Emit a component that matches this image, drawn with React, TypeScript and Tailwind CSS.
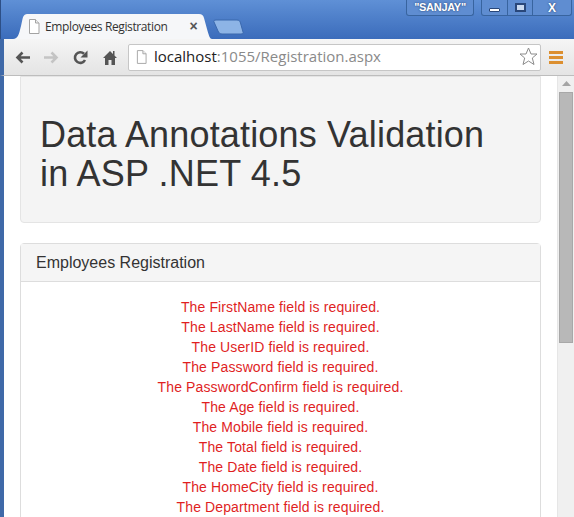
import React from "react";

const errors = ["FirstName", "LastName", "UserID", "Password", "PasswordConfirm", "Age", "Mobile", "Total", "Date", "HomeCity", "Department"];

function PageIcon({ className }: { className: string }) {
  return (
    <svg className={className} viewBox="0 0 12 15" fill="none">
      <path d="M1.5 .5H7.5L11 4V14.5H1.5Z" fill="#fff" stroke="#a3a3a3" />
      <path d="M7.5 .5V4H11" stroke="#a3a3a3" fill="#eee" />
    </svg>
  );
}

export default function App() {
  return (
    <div className="w-[574px] h-[517px] overflow-hidden flex flex-col bg-white font-['Liberation_Sans',Arial,sans-serif]">
      {/* title bar */}
      <div className="h-[39px] shrink-0 bg-gradient-to-b from-[#5f90d6] to-[#3b6cbb] flex border-l-[1px] border-[#2d4f86] relative">
        <div className="relative ml-[12px] mt-[14px] w-[199px] h-[25px]">
          <svg className="absolute inset-0" width="199" height="25" viewBox="0 0 199 25">
            <path d="M0 25C5 25 6 20 8 12L9.500 5C10.500 1 12 0 15 0H186C189 0 190 1 191 4L194 15C196 22 197 25 199 25Z" fill="#f6f7f9" />
          </svg>
          <div className="relative flex items-center h-full pl-[15px]">
            <PageIcon className="w-[12px] h-[15px]" />
            <span className="ml-[5px] text-[12px] text-[#333] font-['Open_Sans',sans-serif] tracking-[-0.38px]">Employees Registration</span>
            <span className="ml-[22px] text-[14px] font-bold text-[#555]">×</span>
          </div>
        </div>
        <svg className="mt-[19px] ml-[1px]" width="32" height="16" viewBox="0 0 32 16">
          <path d="M3 1H24C26 1 27 2 27.500 4L30 13C30.500 14 30 15 28 15H9C7 15 6 14 5 12L1 3C.5 2 1 1 3 1Z" fill="#8db4e6" stroke="#3a68ad" />
        </svg>
        <div className="absolute top-0 left-[405px] w-[68px] h-[16px] rounded-b-[3px] border border-t-0 border-[#38649f] bg-[#5f8dd1] flex items-center justify-center text-[11px] font-bold text-white [text-shadow:0_0_2px_#1d3763] tracking-[-0.3px]">
          "SANJAY"
        </div>
        <div className="absolute top-0 left-[480px] w-[91px] h-[16px] rounded-b-[3px] border border-t-0 border-[#38649f] bg-[#5f8dd1] flex">
          <div className="w-[26px] border-r border-[#38649f] flex items-end justify-center pb-[3px]">
            <div className="w-[11px] h-[4px] border border-[#29477a] bg-white rounded-[1px]" />
          </div>
          <div className="w-[25px] border-r border-[#38649f] flex items-center justify-center">
            <div className="w-[11px] h-[9px] border-2 border-[#29477a] bg-[#c9d9ef]" />
          </div>
          <div className="flex-1 flex items-center justify-center text-[12px] font-bold text-white [text-shadow:0_0_2px_#1d3763]">X</div>
        </div>
      </div>

      {/* toolbar */}
      <div className="h-[37px] shrink-0 bg-gradient-to-b from-[#f5f5f5] to-[#e4e4e4] border-l-[4px] border-b border-l-[#3f69a8] border-b-[#bdbdbd] flex items-center">
        <svg className="ml-[11px]" width="15" height="13" viewBox="0 0 15 13" fill="none" stroke="#555" strokeWidth="2.600">
          <path d="M15 6.500H3M7.500 1.500L2.500 6.500L7.500 11.500" />
        </svg>
        <svg className="ml-[14px]" width="15" height="13" viewBox="0 0 15 13" fill="none" stroke="#c4c4c4" strokeWidth="2.600">
          <path d="M0 6.500H12M7.500 1.500L12.500 6.500L7.500 11.500" />
        </svg>
        <svg className="ml-[14px]" width="15" height="15" viewBox="0 0 15 15" fill="none">
          <path d="M12 10A5.300 5.300 0 1 1 11 3.800" stroke="#555" strokeWidth="2.600" />
          <path d="M14.500 0.500V7.500H7.500Z" fill="#555" />
        </svg>
        <svg className="ml-[15px]" width="14" height="15" viewBox="0 0 14 15">
          <path d="M7 1L0 8H2V15H5.500V10H8.500V15H12V8H14L11.500 5.500V1H10V4Z" fill="#555" />
        </svg>
        <div className="ml-[11px] w-[413px] h-[27px] bg-white border border-[#c6c6c6] rounded-[2px] flex items-center pl-[7px] pb-[1px]">
          <PageIcon className="w-[11px] h-[14px]" />
          <span className="ml-[7px] text-[15px] font-['Open_Sans',sans-serif] text-[#8a8a8a] whitespace-nowrap"><span className="text-[#222]">localhost</span>:1055/Registration.aspx</span>
          <svg className="ml-auto mr-[2px]" width="19" height="19" viewBox="0 0 19 19">
            <path d="M9.500 1L12 7H18L13.300 11L15 17.500L9.500 14L4 17.500L5.700 11L1 7H7Z" fill="#fff" stroke="#8b8b8b" />
          </svg>
        </div>
        <div className="ml-[8px] w-[14px] flex flex-col gap-[2px]">
          <div className="h-[3px] bg-[#dc8f2f]" />
          <div className="h-[3px] bg-[#dc8f2f]" />
          <div className="h-[3px] bg-[#dc8f2f]" />
        </div>
      </div>

      {/* viewport */}
      <div className="flex-1 flex min-h-0 border-l-[4px] border-[#3f69a8]">
        <div className="flex-1 min-w-0 pl-[16px] pr-[16px] overflow-hidden">
          <div className="h-[147px] bg-[#f4f4f4] border border-[#e4e4e4] rounded-b-[4px] pl-[19px] pt-[38px] text-[36px] leading-[39px] tracking-[0.17px] text-[#333]">
            Data Annotations Validation<br />in ASP .NET 4.5
          </div>
          <div className="mt-[20px] border border-[#dddddd] rounded-t-[4px]">
            <div className="h-[38px] bg-[#f5f5f5] border-b border-[#dddddd] pl-[15px] flex items-center text-[16px] text-[#333]">Employees Registration</div>
            <div className="pt-[15px] text-center text-[14px] leading-[20px] tracking-[0.12px] text-[#e01f1f]">
              {errors.map((e) => (
                <div key={e}>The {e} field is required.</div>
              ))}
            </div>
          </div>
        </div>
        <div className="w-[17px] shrink-0 bg-[#f0f0f0] border-l border-[#e6e6e6] flex flex-col items-center">
          <svg className="mt-[5px]" width="9" height="6" viewBox="0 0 9 6"><path d="M4.500 0L9 5H0Z" fill="#a5a5a5" /></svg>
          <div className="mt-[5px] w-[14px] h-[251px] bg-[#b8b8b8] border border-[#a8a8a8]" />
        </div>
      </div>
    </div>
  );
}
